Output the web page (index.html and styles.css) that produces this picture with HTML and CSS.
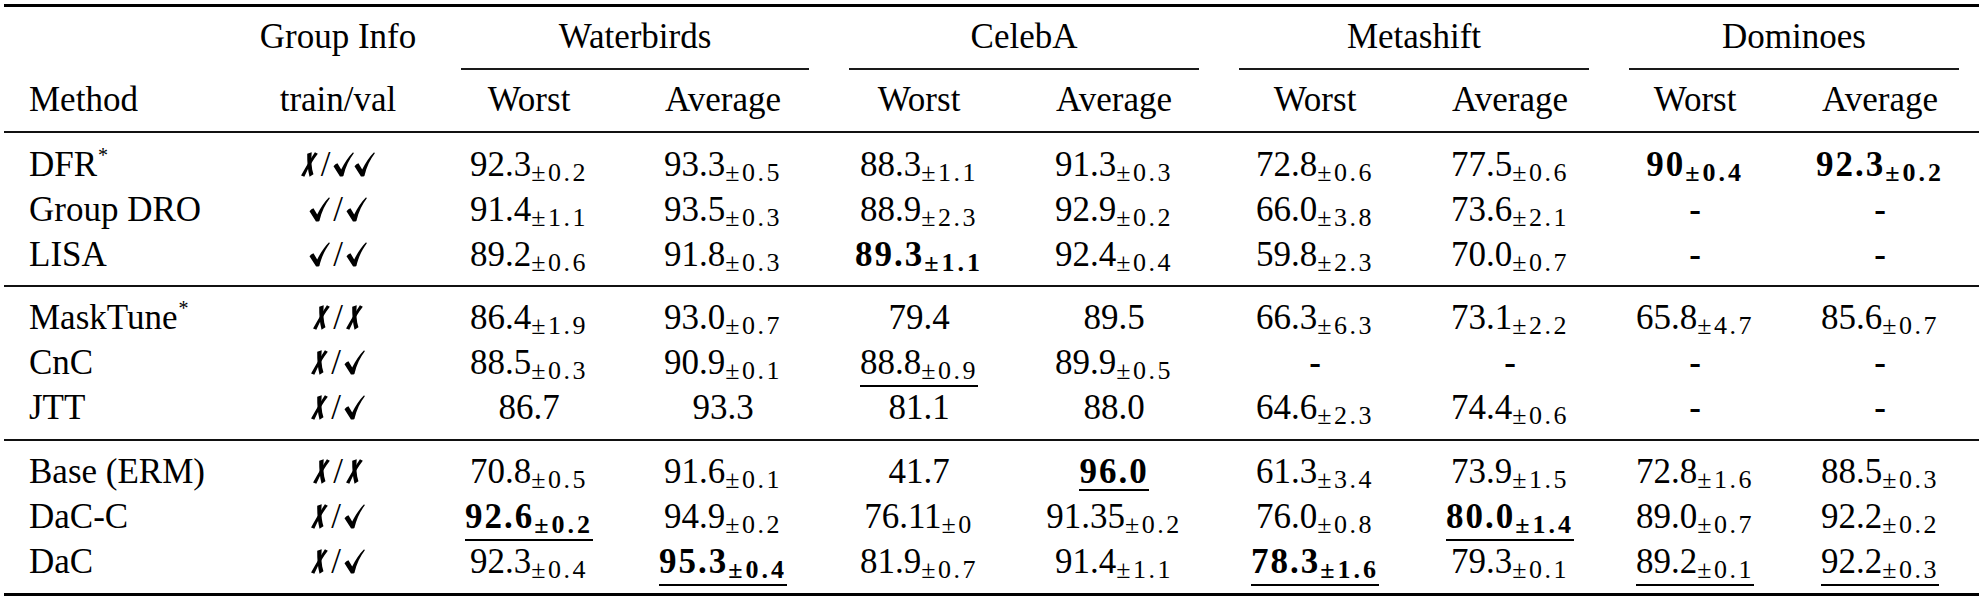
FILE: index.html
```html
<!DOCTYPE html>
<html>
<head>
<meta charset="utf-8">
<link rel="stylesheet" href="styles.css">
</head>
<body>
<svg class="sprite" aria-hidden="true">
  <symbol id="ck-x" viewBox="0 0 17.5 26">
    <g transform="translate(5 0) skewX(-12) scale(0.8 1)">
      <path d="M2.2 1.8 L7.6 0.2 C9 9 11.6 16.6 16 23.2 L11.6 25.8 C7.2 18 4.2 10 2.2 1.8 Z"/>
      <path d="M11.8 0.2 L16 1.8 C11.6 8 7.6 16 4.8 25.8 L0.2 24.4 C4 15.4 7.8 7.4 11.8 0.2 Z"/>
    </g>
  </symbol>
  <symbol id="ck-v" viewBox="0 0 20 24">
    <path d="M0.4 13.6 C1.6 12.2 3 11.2 4.2 10.8 L7.8 16.8 C10.8 10.6 14.6 5 19.2 0.3 L19.9 1.2 C15.6 7 12 14 9.9 23 C9 23.6 7.4 23.8 6.6 23.4 Z"/>
  </symbol>
</svg>
<div class="page">
<table class="results">
<colgroup>
<col class="c-method"><col class="c-info">
<col class="c-w1"><col class="c-a1">
<col class="c-w2"><col class="c-a2">
<col class="c-w3"><col class="c-a3">
<col class="c-w4"><col class="c-a4">
</colgroup>
<thead>
<tr class="h1">
<th></th>
<th>Group Info</th>
<th colspan="2"><div class="grp">Waterbirds</div></th>
<th colspan="2"><div class="grp">CelebA</div></th>
<th colspan="2"><div class="grp">Metashift</div></th>
<th colspan="2"><div class="grp">Dominoes</div></th>
</tr>
<tr class="h2">
<th class="m">Method</th>
<th>train/val</th>
<th>Worst</th><th>Average</th>
<th>Worst</th><th>Average</th>
<th>Worst</th><th>Average</th>
<th>Worst</th><th>Average</th>
</tr>
</thead>
<tbody class="sec">
<tr class="first">
<td class="m">DFR<sup>*</sup></td>
<td><svg class="ck x"><use href="#ck-x"/></svg><span class="sl">/</span><svg class="ck v"><use href="#ck-v"/></svg><svg class="ck v"><use href="#ck-v"/></svg></td>
<td><span class="v">92.3<sub>±0.2</sub></span></td>
<td><span class="v">93.3<sub>±0.5</sub></span></td>
<td><span class="v">88.3<sub>±1.1</sub></span></td>
<td><span class="v">91.3<sub>±0.3</sub></span></td>
<td><span class="v">72.8<sub>±0.6</sub></span></td>
<td><span class="v">77.5<sub>±0.6</sub></span></td>
<td><span class="v b">90<sub>±0.4</sub></span></td>
<td><span class="v b">92.3<sub>±0.2</sub></span></td>
</tr>
<tr>
<td class="m">Group DRO</td>
<td><svg class="ck v"><use href="#ck-v"/></svg><span class="sl">/</span><svg class="ck v"><use href="#ck-v"/></svg></td>
<td><span class="v">91.4<sub>±1.1</sub></span></td>
<td><span class="v">93.5<sub>±0.3</sub></span></td>
<td><span class="v">88.9<sub>±2.3</sub></span></td>
<td><span class="v">92.9<sub>±0.2</sub></span></td>
<td><span class="v">66.0<sub>±3.8</sub></span></td>
<td><span class="v">73.6<sub>±2.1</sub></span></td>
<td><span class="d">-</span></td>
<td><span class="d">-</span></td>
</tr>
<tr class="last">
<td class="m">LISA</td>
<td><svg class="ck v"><use href="#ck-v"/></svg><span class="sl">/</span><svg class="ck v"><use href="#ck-v"/></svg></td>
<td><span class="v">89.2<sub>±0.6</sub></span></td>
<td><span class="v">91.8<sub>±0.3</sub></span></td>
<td><span class="v b">89.3<sub>±1.1</sub></span></td>
<td><span class="v">92.4<sub>±0.4</sub></span></td>
<td><span class="v">59.8<sub>±2.3</sub></span></td>
<td><span class="v">70.0<sub>±0.7</sub></span></td>
<td><span class="d">-</span></td>
<td><span class="d">-</span></td>
</tr>
</tbody>
<tbody class="sec">
<tr class="first">
<td class="m">MaskTune<sup>*</sup></td>
<td><svg class="ck x"><use href="#ck-x"/></svg><span class="sl">/</span><svg class="ck x"><use href="#ck-x"/></svg></td>
<td><span class="v">86.4<sub>±1.9</sub></span></td>
<td><span class="v">93.0<sub>±0.7</sub></span></td>
<td><span class="v">79.4</span></td>
<td><span class="v">89.5</span></td>
<td><span class="v">66.3<sub>±6.3</sub></span></td>
<td><span class="v">73.1<sub>±2.2</sub></span></td>
<td><span class="v">65.8<sub>±4.7</sub></span></td>
<td><span class="v">85.6<sub>±0.7</sub></span></td>
</tr>
<tr>
<td class="m">CnC</td>
<td><svg class="ck x"><use href="#ck-x"/></svg><span class="sl">/</span><svg class="ck v"><use href="#ck-v"/></svg></td>
<td><span class="v">88.5<sub>±0.3</sub></span></td>
<td><span class="v">90.9<sub>±0.1</sub></span></td>
<td><span class="v u">88.8<sub>±0.9</sub></span></td>
<td><span class="v">89.9<sub>±0.5</sub></span></td>
<td><span class="d">-</span></td>
<td><span class="d">-</span></td>
<td><span class="d">-</span></td>
<td><span class="d">-</span></td>
</tr>
<tr class="last">
<td class="m">JTT</td>
<td><svg class="ck x"><use href="#ck-x"/></svg><span class="sl">/</span><svg class="ck v"><use href="#ck-v"/></svg></td>
<td><span class="v">86.7</span></td>
<td><span class="v">93.3</span></td>
<td><span class="v">81.1</span></td>
<td><span class="v">88.0</span></td>
<td><span class="v">64.6<sub>±2.3</sub></span></td>
<td><span class="v">74.4<sub>±0.6</sub></span></td>
<td><span class="d">-</span></td>
<td><span class="d">-</span></td>
</tr>
</tbody>
<tbody class="sec end">
<tr class="first">
<td class="m">Base (ERM)</td>
<td><svg class="ck x"><use href="#ck-x"/></svg><span class="sl">/</span><svg class="ck x"><use href="#ck-x"/></svg></td>
<td><span class="v">70.8<sub>±0.5</sub></span></td>
<td><span class="v">91.6<sub>±0.1</sub></span></td>
<td><span class="v">41.7</span></td>
<td><span class="v b u0">96.0</span></td>
<td><span class="v">61.3<sub>±3.4</sub></span></td>
<td><span class="v">73.9<sub>±1.5</sub></span></td>
<td><span class="v">72.8<sub>±1.6</sub></span></td>
<td><span class="v">88.5<sub>±0.3</sub></span></td>
</tr>
<tr>
<td class="m">DaC-C</td>
<td><svg class="ck x"><use href="#ck-x"/></svg><span class="sl">/</span><svg class="ck v"><use href="#ck-v"/></svg></td>
<td><span class="v b u">92.6<sub>±0.2</sub></span></td>
<td><span class="v">94.9<sub>±0.2</sub></span></td>
<td><span class="v">76.11<sub>±0</sub></span></td>
<td><span class="v">91.35<sub>±0.2</sub></span></td>
<td><span class="v">76.0<sub>±0.8</sub></span></td>
<td><span class="v b u">80.0<sub>±1.4</sub></span></td>
<td><span class="v">89.0<sub>±0.7</sub></span></td>
<td><span class="v">92.2<sub>±0.2</sub></span></td>
</tr>
<tr class="last">
<td class="m">DaC</td>
<td><svg class="ck x"><use href="#ck-x"/></svg><span class="sl">/</span><svg class="ck v"><use href="#ck-v"/></svg></td>
<td><span class="v">92.3<sub>±0.4</sub></span></td>
<td><span class="v b u">95.3<sub>±0.4</sub></span></td>
<td><span class="v">81.9<sub>±0.7</sub></span></td>
<td><span class="v">91.4<sub>±1.1</sub></span></td>
<td><span class="v b u">78.3<sub>±1.6</sub></span></td>
<td><span class="v">79.3<sub>±0.1</sub></span></td>
<td><span class="v u">89.2<sub>±0.1</sub></span></td>
<td><span class="v u">92.2<sub>±0.3</sub></span></td>
</tr>
</tbody>
</table>
</div>
</body>
</html>
```
FILE: styles.css
```css
html, body {
  margin: 0;
  padding: 0;
  background: #ffffff;
}

.sprite {
  display: block;
  width: 0;
  height: 0;
  overflow: hidden;
}

.page {
  padding: 4px 0 0 4px;
}

.results {
  border-collapse: collapse;
  table-layout: fixed;
  width: 1975px;
  font-family: "Liberation Serif", "Tinos", "Times New Roman", "DejaVu Serif", serif;
  font-size: 35px;
  color: #000;
  border-top: 3px solid #000;
}

.c-method { width: 231px; }
.c-info { width: 206px; }
.c-w1 { width: 176px; }
.c-a1 { width: 212px; }
.c-w2 { width: 180px; }
.c-a2 { width: 210px; }
.c-w3 { width: 192px; }
.c-a3 { width: 198px; }
.c-w4 { width: 172px; }
.c-a4 { width: 198px; }

.results th,
.results td {
  font-family: "Liberation Serif", "Tinos", "Times New Roman", "DejaVu Serif", serif;
  padding: 0;
  text-align: center;
  font-weight: normal;
  line-height: 45px;
  white-space: nowrap;
  vertical-align: top;
}

.results th.m,
.results td.m {
  text-align: left;
  padding-left: 25px;
}

.h1 th {
  padding-top: 7px;
}

.grp {
  margin: 0 20px;
  padding-bottom: 9px;
  border-bottom: 2px solid #1a1a1a;
}

.h1 th:nth-child(1),
.h1 th:nth-child(2) {
  padding-bottom: 11px;
}

.h2 th {
  padding-top: 7px;
  padding-bottom: 9px;
  border-bottom: 2px solid #111;
}

.sec .first td {
  padding-top: 8px;
}

tbody.sec:first-of-type .first td {
  padding-top: 9px;
}

.sec .last td {
  padding-bottom: 9px;
  border-bottom: 2px solid #111;
}

tbody.sec:first-of-type .last td {
  padding-bottom: 8px;
}

.sec.end .last td {
  border-bottom: 3px solid #000;
}

sup {
  font-size: 20px;
  line-height: 0;
  vertical-align: 14px;
  margin-left: 1px;
}

.v sub {
  font-size: 26px;
  line-height: 0;
  vertical-align: -5px;
  letter-spacing: 2.5px;
}

.v.b {
  font-weight: bold;
  letter-spacing: 2px;
}

.v.b sub {
  font-weight: bold;
  letter-spacing: 3px;
}

.v.u {
  display: inline-block;
  line-height: 38px;
  padding-bottom: 3px;
  border-bottom: 2px solid #000;
  margin-bottom: -5px;
}

.v.u0 {
  display: inline-block;
  line-height: 35px;
  border-bottom: 2px solid #000;
  margin-bottom: -2px;
}

.ck {
  display: inline-block;
  fill: #000;
  vertical-align: -1px;
}

.ck.x {
  width: 17px;
  height: 25px;
}

.ck.v {
  width: 21px;
  height: 25px;
}

.sl {
  margin: 0 3px 0 3px;
}

.d {
  font-weight: bold;
}
```
